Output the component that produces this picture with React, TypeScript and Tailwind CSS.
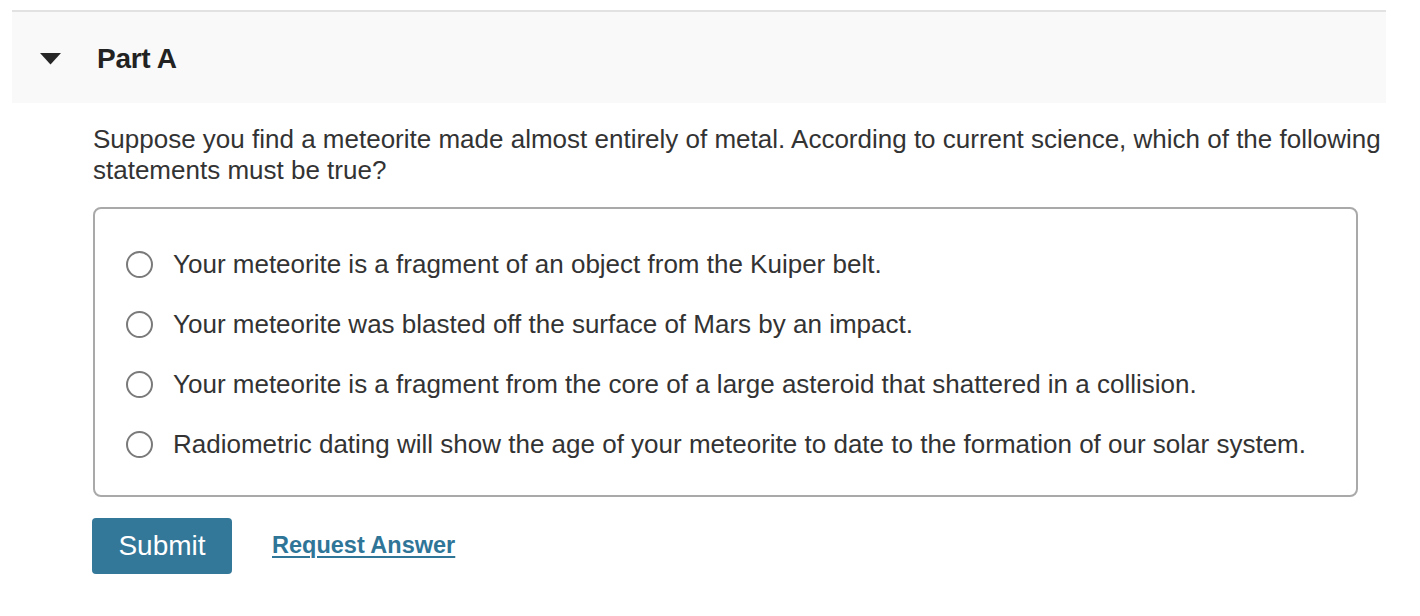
const options = [
  "Your meteorite is a fragment of an object from the Kuiper belt.",
  "Your meteorite was blasted off the surface of Mars by an impact.",
  "Your meteorite is a fragment from the core of a large asteroid that shattered in a collision.",
  "Radiometric dating will show the age of your meteorite to date to the formation of our solar system.",
];

export default function App() {
  return (
    <div className="min-h-[616px] bg-white pt-[10px] text-[#333] font-['Liberation_Sans',Arial,sans-serif]">
      {/* Part header */}
      <div className="mx-[12px] w-[1374px] border-t-2 border-[#e2e2e2] bg-[#f9f9f9] h-[93px] flex items-center">
        <svg width="21" height="12" viewBox="0 0 21 12" className="ml-[28px] mt-[2px]">
          <path d="M0 0 H21 L10.5 11.5 Z" fill="#262626" />
        </svg>
        <h2 className="ml-[36px] mt-[2px] text-[28px] font-bold text-[#222] tracking-[-0.3px]">Part A</h2>
      </div>

      <div className="pl-[93px] pr-[30px]">
        <p className="mt-[21px] text-[26px] leading-[31px] text-[#333] w-[1297px]">
          Suppose you find a meteorite made almost entirely of metal. According to current science, which of the following statements must be true?
        </p>

        <div className="mt-[21px] w-[1265px] h-[290px] rounded-[8px] border-2 border-[#a9a9a9] pt-[40px] pl-[31px]">
          <div className="flex flex-col gap-[30px]">
            {options.map((o) => (
              <label key={o} className="flex items-center h-[30px] cursor-pointer">
                <span className="w-[27px] h-[27px] rounded-full border-2 border-[#7a7a7a] bg-white shrink-0" />
                <span className="ml-[20px] text-[26px] text-[#333]">{o}</span>
              </label>
            ))}
          </div>
        </div>

        <div className="mt-[21px] flex items-center">
          <button className="w-[140px] h-[56px] rounded-[4px] bg-[#337799] text-white text-[28px] -ml-[1px]">
            Submit
          </button>
          <a href="#" className="ml-[40px] text-[23.5px] font-bold text-[#2e7598] underline decoration-2 underline-offset-[3px]">
            Request Answer
          </a>
        </div>
      </div>
    </div>
  );
}
